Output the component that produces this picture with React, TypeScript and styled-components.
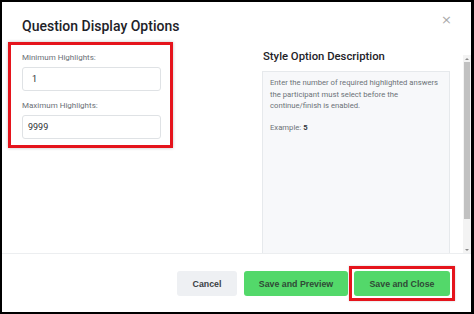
import React from "react";
import styled, { createGlobalStyle } from "styled-components";

const Global = createGlobalStyle`
  html, body { margin: 0; padding: 0; background: #000; }
  body { width: 474px; height: 314px; overflow: hidden; }
  * { box-sizing: border-box; }
`;

const Modal = styled.div`
  margin: 2px 3px 2px 2px;
  width: 469px;
  height: 310px;
  background: #fff;
  display: flex;
  flex-direction: column;
  font-family: Roboto, "Liberation Sans", sans-serif;
`;

const Header = styled.div`
  height: 40px;
  padding: 8px 20px 0 20px;
  display: flex;
  align-items: center;
  justify-content: space-between;
`;

const Title = styled.h1`
  margin: 0;
  font-size: 14px;
  font-weight: 500;
  color: #1e2228;
`;

const Close = styled.span`
  align-self: flex-start;
  margin-top: 3px;
  margin-right: -1px;
  font-size: 13px;
  line-height: 14px;
  color: #aaa;
  font-family: "DejaVu Sans", sans-serif;
`;

const Body = styled.div`
  height: 211px;
  display: flex;
  flex-direction: row;
`;

const FormBox = styled.div`
  margin-left: 6px;
  width: 165px;
  height: 106px;
  border: 3px solid #e5141c;
  box-shadow: 0 0 3px rgba(0, 0, 0, 0.25);
  padding: 8px 9px 0 11px;
  display: flex;
  flex-direction: column;
`;

const Label = styled.label`
  font-size: 8px;
  line-height: 10px;
  color: #6b7076;
  margin-bottom: 4px;
  flex-shrink: 0;
`;

const Input = styled.div<{ $pad: number }>`
  flex-shrink: 0;
  height: 24px;
  border: 1px solid #dfe2e5;
  border-radius: 3px;
  display: flex;
  align-items: center;
  padding-left: ${(p) => p.$pad}px;
  font-size: 9px;
  color: #2b2f33;
  margin-bottom: 10px;
`;

const RightCol = styled.div`
  margin-left: 89px;
  width: 188px;
  display: flex;
  flex-direction: column;
`;

const SubTitle = styled.h2`
  margin: 7px 0 6px 1px;
  font-size: 11.3px;
  line-height: 16px;
  font-weight: 500;
  color: #1e2228;
`;

const DescBox = styled.div`
  flex: 1;
  background: #f7f8fa;
  border: 1px solid #e6e9ec;
  border-bottom: none;
  padding: 5px 4px 5px 7px;
  font-size: 7.7px;
  line-height: 11.5px;
  color: #6c7278;
`;

const Para = styled.p`
  margin: 0 0 10.5px 0;
`;

const Strong = styled.b`
  color: #30353a;
  font-weight: 700;
`;

const Scrollbar = styled.div`
  margin-left: 13px;
  margin-top: 13px;
  width: 8px;
  display: flex;
  flex-direction: column;
  background: #f3f3f3;
`;

const Arrow = styled.div<{ $down?: boolean }>`
  height: 7px;
  display: flex;
  align-items: center;
  justify-content: center;
  &::after {
    content: "";
    border-left: 2px solid transparent;
    border-right: 2px solid transparent;
    ${(p) => (p.$down ? "border-top: 2px solid #8a8a8a;" : "border-bottom: 2px solid #8a8a8a;")}
  }
`;

const Thumb = styled.div`
  height: 157px;
  background: #c1c1c1;
  margin: 0 1px;
`;

const Track = styled.div`
  flex: 1;
`;

const Footer = styled.div`
  flex: 1;
  border-top: 1px solid #eceef0;
  display: flex;
  justify-content: flex-end;
  align-items: flex-start;
  padding: 17px 21px 0 0;
`;

const Button = styled.button<{ $variant: "grey" | "green"; $w: number; $gap: number }>`
  display: block;
  width: ${(p) => p.$w}px;
  margin-right: ${(p) => p.$gap}px;
  height: 25px;
  border: none;
  border-radius: 3px;
  font-family: "Liberation Sans", Arial, sans-serif;
  font-weight: 700;
  font-size: 8.8px;
  color: ${(p) => (p.$variant === "green" ? "#2f4a36" : "#3a3f44")};
  background: ${(p) => (p.$variant === "green" ? "#53d86a" : "#eef0f3")};
  padding: 0;
`;

const Marker = styled.div`
  margin: -5px;
  padding: 2px;
  border: 3px solid #e5141c;
  box-shadow: 0 0 2px rgba(0, 0, 0, 0.2);
`;

export default function App() {
  return (
    <>
      <Global />
      <Modal>
        <Header>
          <Title>Question Display Options</Title>
          <Close>×</Close>
        </Header>
        <Body>
          <FormBox>
            <Label>Minimum Highlights:</Label>
            <Input $pad={9}>1</Input>
            <Label>Maximum Highlights:</Label>
            <Input $pad={5}>9999</Input>
          </FormBox>
          <RightCol>
            <SubTitle>Style Option Description</SubTitle>
            <DescBox>
              <Para>
                Enter the number of required highlighted answers the participant must select before the
                continue/finish is enabled.
              </Para>
              <Para>
                Example: <Strong>5</Strong>
              </Para>
            </DescBox>
          </RightCol>
          <Scrollbar>
            <Arrow />
            <Thumb />
            <Track />
            <Arrow $down />
          </Scrollbar>
        </Body>
        <Footer>
          <Button $variant="grey" $w={60} $gap={7}>Cancel</Button>
          <Button $variant="green" $w={104} $gap={6}>Save and Preview</Button>
          <Marker>
            <Button $variant="green" $w={96} $gap={0}>Save and Close</Button>
          </Marker>
        </Footer>
      </Modal>
    </>
  );
}
